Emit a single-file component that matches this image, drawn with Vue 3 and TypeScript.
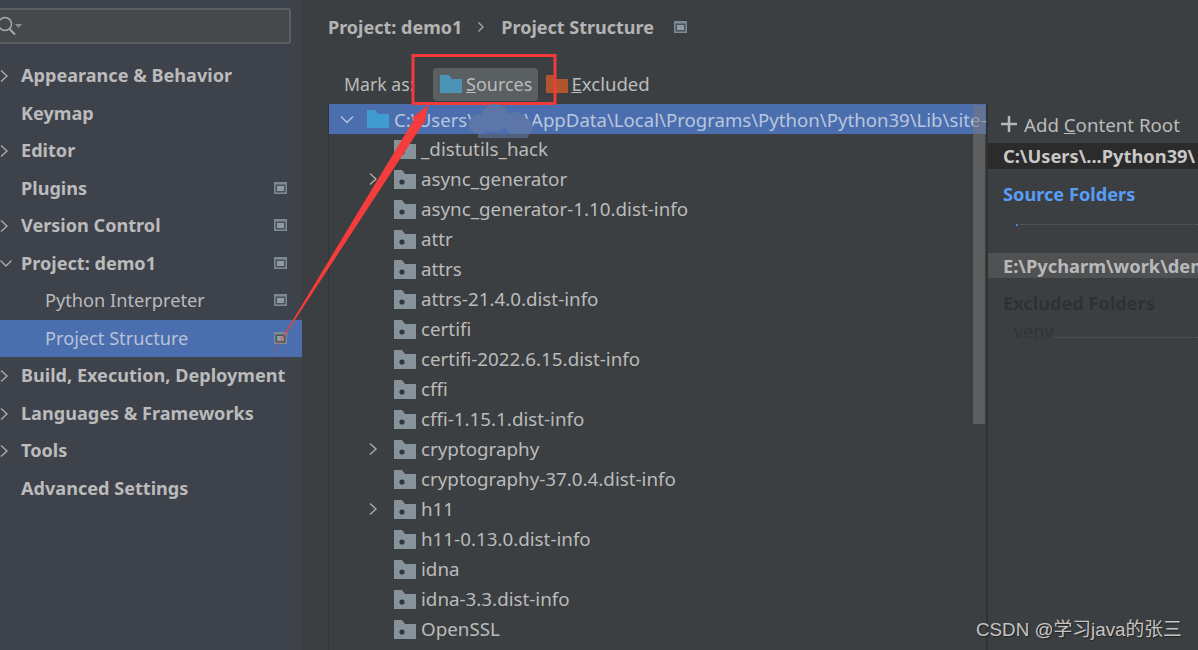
<template>
  <div class="settings">
    <aside class="sidebar">
      <div class="search">
        <svg class="search-icon" width="24" height="22" viewBox="0 0 24 22">
          <circle cx="5" cy="9" r="6.5" fill="none" stroke="#a7a9aa" stroke-width="1.5" />
          <path d="M9.5 14 L15 19.5" stroke="#a7a9aa" stroke-width="2" />
          <path d="M15 9 H22 L18.5 13 Z" fill="#8a8d8f" />
        </svg>
      </div>
      <div
        v-for="item in navItems"
        :key="item.label"
        class="nav-row"
        :class="{ selected: item.selected, child: item.child, strong: !item.child }"
      >
        <svg v-if="item.arrow" class="nav-arrow" width="12" height="14" viewBox="0 0 12 14">
          <path
            :d="item.arrow === 'open' ? 'M0.500 3.500 L6 9 L11.500 3.500' : 'M1 1.500 L7 7 L1 12.500'"
            fill="none"
            stroke="#a9abac"
            stroke-width="1.400"
          />
        </svg>
        <span class="nav-label">{{ item.label }}</span>
        <svg v-if="item.badge" class="badge" width="13" height="12" viewBox="0 0 13 12">
          <rect width="13" height="12" fill="#7f8b94" />
          <rect x="1.500" y="2.500" width="10" height="8" fill="#4b5359" />
          <rect x="3" y="4" width="7" height="5" fill="#8f9ba3" />
        </svg>
      </div>
    </aside>

    <main class="content">
      <header class="crumbs">
        <span>Project: demo1</span>
        <svg class="crumb-sep" width="8" height="12" viewBox="0 0 8 12">
          <path d="M1.500 1.500 L6 6 L1.500 10.500" fill="none" stroke="#a9abac" stroke-width="1.300" />
        </svg>
        <span>Project Structure</span>
        <svg class="crumb-badge" width="13" height="12" viewBox="0 0 13 12">
          <rect width="13" height="12" fill="#7f8b94" />
          <rect x="1.500" y="2.500" width="10" height="8" fill="#4b5359" />
          <rect x="3" y="4" width="7" height="5" fill="#8f9ba3" />
        </svg>
      </header>

      <div class="mark-bar">
        <span class="mark-label">Mark as:</span>
        <span class="mark-btn active">
          <svg width="22" height="18" viewBox="0 0 22 18">
            <path d="M0 0 H9 L12 4 H22 V18 H0 Z" fill="#4a93b5" />
          </svg>
          <span><u>S</u>ources</span>
        </span>
        <span class="mark-btn excluded">
          <svg width="22" height="18" viewBox="0 0 22 18">
            <path d="M0 0 H9 L10 4 H22 V18 H0 Z" fill="#b0562c" />
          </svg>
          <span><u>E</u>xcluded</span>
        </span>
      </div>

      <div class="panels">
        <section class="tree">
          <div class="tree-root">
            <svg class="root-arrow" width="14" height="9" viewBox="0 0 14 9">
              <path d="M1 1.500 L7 7.500 L13 1.500" fill="none" stroke="#b7c3d9" stroke-width="1.500" />
            </svg>
            <svg class="root-folder" width="22" height="18" viewBox="0 0 22 18">
              <path d="M0 0 H8 L11 4 H22 V18 H0 Z" fill="#3f9bd0" />
            </svg>
            <span class="root-path">C:\Users\<span class="hidden-name"></span>\AppData\Local\Programs\Python\Python39\Lib\site-</span>
          </div>
          <div v-for="row in treeRows" :key="row.name" class="tree-row">
            <span class="tree-arrow">
              <svg v-if="row.arrow" width="9" height="14" viewBox="0 0 9 14">
                <path d="M1 1.500 L7 7 L1 12.500" fill="none" stroke="#a9abac" stroke-width="1.400" />
              </svg>
            </span>
            <svg class="pkg-folder" width="22" height="19" viewBox="0 0 22 19">
              <path d="M0 0 H8 L11 4 H22 V19 H0 Z" fill="#87939a" />
              <circle cx="8" cy="12" r="2.600" fill="#33373a" />
            </svg>
            <span>{{ row.name }}</span>
          </div>
          <div class="scrollbar"></div>
        </section>

        <section class="roots">
          <div class="add-root">
            <svg width="16" height="16" viewBox="0 0 16 16">
              <path d="M8 0 V16 M0 8 H16" stroke="#b5b8ba" stroke-width="2.500" />
            </svg>
            <span>Add <u>C</u>ontent Root</span>
          </div>
          <div class="root-head dark">C:\Users\...Python39\</div>
          <div class="group-title blue">Source Folders</div>
          <div class="folder-line first"><span class="dot-name">.</span><span class="dots"></span></div>
          <div class="root-head grey">E:\Pycharm\work\dem</div>
          <div class="group-title dim">Excluded Folders</div>
          <div class="folder-line"><span class="venv">venv</span><span class="dots"></span></div>
        </section>
      </div>
    </main>

    <!-- annotations drawn over the screenshot -->
    <svg class="markup" width="1198" height="650" viewBox="0 0 1198 650">
      <rect x="413" y="55.500" width="142" height="48" fill="none" stroke="#f23a3a" stroke-width="3" />
      <path d="M270 358 L414 119.500 L412 118 L428 105 L425 122 L422.500 124.500 Z" fill="#f53c3c" />
      <g fill="#5d76a9">
        <circle cx="479" cy="124" r="10" />
        <circle cx="495" cy="118" r="14" />
        <circle cx="515" cy="123" r="11" />
        <circle cx="524" cy="127" r="9" />
      </g>
      <rect x="478" y="134" width="50" height="4" fill="#525f7d" />
    </svg>
    <div class="watermark">CSDN @学习java的张三</div>
  </div>
</template>

<script setup lang="ts">
interface NavItem {
  label: string
  arrow?: 'open' | 'closed'
  badge?: boolean
  child?: boolean
  selected?: boolean
}

interface TreeRow {
  name: string
  arrow?: boolean
}

const navItems: NavItem[] = [
  { label: 'Appearance & Behavior', arrow: 'closed' },
  { label: 'Keymap' },
  { label: 'Editor', arrow: 'closed' },
  { label: 'Plugins', badge: true },
  { label: 'Version Control', arrow: 'closed', badge: true },
  { label: 'Project: demo1', arrow: 'open', badge: true },
  { label: 'Python Interpreter', child: true, badge: true },
  { label: 'Project Structure', child: true, badge: true, selected: true },
  { label: 'Build, Execution, Deployment', arrow: 'closed' },
  { label: 'Languages & Frameworks', arrow: 'closed' },
  { label: 'Tools', arrow: 'closed' },
  { label: 'Advanced Settings' },
]

const treeRows: TreeRow[] = [
  { name: '_distutils_hack' },
  { name: 'async_generator', arrow: true },
  { name: 'async_generator-1.10.dist-info' },
  { name: 'attr' },
  { name: 'attrs' },
  { name: 'attrs-21.4.0.dist-info' },
  { name: 'certifi' },
  { name: 'certifi-2022.6.15.dist-info' },
  { name: 'cffi' },
  { name: 'cffi-1.15.1.dist-info' },
  { name: 'cryptography', arrow: true },
  { name: 'cryptography-37.0.4.dist-info' },
  { name: 'h11', arrow: true },
  { name: 'h11-0.13.0.dist-info' },
  { name: 'idna' },
  { name: 'idna-3.3.dist-info' },
  { name: 'OpenSSL' },
]
</script>

<style>
html,
body {
  margin: 0;
  background: #3c3f41;
  overflow: hidden;
}
</style>

<style scoped>
.settings {
  position: relative;
  display: flex;
  width: 1198px;
  height: 650px;
  overflow: hidden;
  background: #3c3f41;
  color: #bbbbbb;
  font-family: "Noto Sans", "Open Sans", sans-serif;
  font-size: 18px;
}

.sidebar {
  width: 302px;
  flex-shrink: 0;
  background: #3e424b;
}

.search {
  display: flex;
  align-items: center;
  box-sizing: border-box;
  width: 297px;
  height: 36px;
  margin: 8px 0 13px -6px;
  padding-left: 6px;
  background: #45494a;
  border: 2px solid #5b5f60;
  border-radius: 3px;
}

.search-icon {
  margin-left: -2px;
}

.nav-row {
  position: relative;
  display: flex;
  align-items: center;
  height: 37.5px;
  padding-left: 21px;
  padding-right: 15px;
  padding-bottom: 0.6px;
  box-sizing: border-box;
}

.nav-row.strong .nav-label {
  font-weight: 700;
  font-size: 18.1px;
}

.nav-row.child {
  padding-left: 45px;
  font-size: 18.2px;
}

.nav-row.selected {
  background: #4b6eaf;
}

.nav-row.selected .nav-label {
  color: #b6c2d8;
}

.nav-arrow {
  position: absolute;
  left: 0;
  top: 12px;
}

.nav-label {
  flex: 1;
  white-space: nowrap;
}

.content {
  flex: 1;
  display: flex;
  flex-direction: column;
  min-width: 0;
}

.crumbs {
  display: flex;
  align-items: center;
  height: 54px;
  margin-bottom: 1px;
  padding-left: 26px;
  font-weight: 700;
  font-size: 18px;
  color: #b4b4b4;
}

.crumb-sep {
  margin: 0 16px 0 15px;
}

.crumb-badge {
  margin-left: 20px;
}

.mark-bar {
  display: flex;
  align-items: center;
  height: 49px;
  padding-left: 42px;
  font-size: 18.6px;
}

.mark-label {
  width: 89px;
  margin-top: 8px;
  font-size: 17.7px;
  white-space: nowrap;
}

.mark-btn {
  display: flex;
  align-items: center;
  gap: 4px;
  height: 33px;
  padding: 0 6px 0 7px;
  margin-top: 9px;
  border-radius: 4px;
  white-space: nowrap;
}

.mark-btn.active {
  background: #5a5f62;
  margin-right: 1px;
  font-size: 18px;
}

.mark-btn.excluded {
  gap: 3px;
  margin-top: 8px;
}

.panels {
  flex: 1;
  display: flex;
  min-height: 0;
  padding-left: 26px;
}

.tree {
  position: relative;
  width: 657px;
  flex-shrink: 0;
  overflow: hidden;
  border-left: 1px solid #323436;
  font-size: 18.8px;
}

.tree-root,
.tree-row {
  display: flex;
  align-items: center;
  height: 30px;
  white-space: nowrap;
}

.tree-root {
  background: #4b6eaf;
  color: #b9c6dc;
}

.root-arrow {
  flex-shrink: 0;
  margin-left: 11px;
}

.root-folder {
  flex-shrink: 0;
  margin-left: 13px;
}

.root-path {
  margin-left: 5px;
  font-size: 18.6px;
}

.hidden-name {
  display: inline-block;
  width: 50px;
}

.tree-arrow {
  display: flex;
  justify-content: flex-start;
  width: 65px;
  padding-left: 40px;
  box-sizing: border-box;
}

.pkg-folder {
  flex-shrink: 0;
  margin-right: 5px;
}

.scrollbar {
  position: absolute;
  top: 1px;
  right: 1px;
  width: 12px;
  height: 319px;
  background: rgba(120, 120, 120, 0.55);
}

.roots {
  flex: 1;
  border-left: 2px solid #323232;
  min-width: 0;
}

.add-root {
  display: flex;
  align-items: center;
  gap: 7px;
  height: 39px;
  padding-left: 13px;
  padding-top: 1px;
  box-sizing: border-box;
  font-size: 18.7px;
  white-space: nowrap;
}

.root-head {
  height: 26px;
  line-height: 26px;
  padding-left: 15px;
  font-size: 18.3px;
  font-weight: 700;
  white-space: nowrap;
  overflow: hidden;
}

.root-head.dark {
  background: #2b2b2b;
  color: #c8c8c8;
}

.root-head.grey {
  height: 25px;
  background: #505152;
  color: #b9b9b9;
}

.group-title {
  height: 30px;
  margin-top: 10px;
  line-height: 30px;
  padding-left: 15px;
  font-size: 18.2px;
  font-weight: 700;
  white-space: nowrap;
}

.blue {
  color: #589df6;
}

.group-title.dim {
  margin-top: 10px;
  color: #2f3133;
}

.folder-line {
  display: flex;
  align-items: flex-end;
  height: 23px;
  padding-left: 26px;
}

.folder-line.first {
  height: 19px;
  margin-bottom: 25px;
  padding-left: 27px;
}

.dot-name {
  color: #589df6;
  font-size: 14px;
  line-height: 14px;
}

.venv {
  margin-bottom: -2px;
  color: #323436;
  line-height: 24px;
}

.dots {
  flex: 1;
  margin-bottom: 3px;
  margin-left: 1px;
  border-bottom: 1px dotted #5d6062;
}

.markup {
  position: absolute;
  left: 0;
  top: 0;
  pointer-events: none;
}

.watermark {
  position: absolute;
  left: 976px;
  top: 614px;
  font-family: "Liberation Sans", "Noto Sans CJK SC", sans-serif;
  font-size: 18.8px;
  color: #c4c4c4;
  text-shadow: 1px 1px 1px #222;
  white-space: nowrap;
}
</style>
